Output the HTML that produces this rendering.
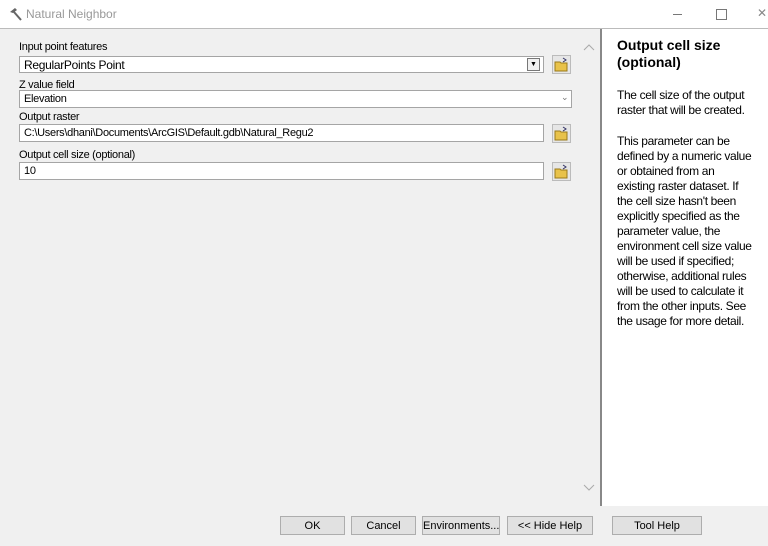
<!DOCTYPE html>
<html><head><style>
body{margin:0;width:768px;height:546px;background:#f0f0f0;font-family:"Liberation Sans",sans-serif;position:relative;overflow:hidden}
.a{position:absolute}
.lbl{font-size:11px;color:#000;letter-spacing:-0.3px}
.box{background:#fff;border:1px solid #a5a5a5;font-size:11px;box-sizing:border-box;padding:2px 4px;letter-spacing:-0.3px}
.btn{border:1px solid #adadad;background:#e1e1e1;font-size:11px;text-align:center;line-height:18px;box-sizing:border-box;height:19px;top:516px}
.help{font-size:12px;line-height:15px;color:#000;letter-spacing:-0.35px;white-space:nowrap}
</style></head><body>
<div class="a" style="left:0;top:0;width:768px;height:28px;background:#fff;border-bottom:1px solid #bbb"></div>
<svg class="a" style="left:7px;top:6px" width="16" height="16"><path d="M3 6 L8 2 L10 4 L6 7 Z" fill="#666"/><path d="M7 6 L14 14" stroke="#666" stroke-width="2"/></svg>
<div class="a" style="left:26px;top:7px;font-size:12px;color:#999">Natural Neighbor</div>
<div class="a" style="left:673px;top:14px;width:9px;height:1px;background:#777"></div>
<div class="a" style="left:716px;top:9px;width:9px;height:9px;border:1px solid #777"></div>
<div class="a" style="left:757px;top:6px;font-size:12px;color:#888">✕</div>

<div class="a lbl" style="left:19px;top:41px">Input point features</div>
<div class="a box" style="left:19px;top:56px;width:525px;height:17px;font-size:12px;padding-top:1px">RegularPoints Point</div>
<div class="a" style="left:527px;top:58px;width:13px;height:13px;border:1px solid #777;box-sizing:border-box;background:#f0f0f0;font-size:7px;text-align:center;line-height:12px">▼</div>
<div class="a lbl" style="left:19px;top:79px">Z value field</div>
<div class="a box" style="left:19px;top:90px;width:553px;height:18px">Elevation</div>
<div class="a" style="left:561px;top:92px;font-size:9px;color:#777">&#8964;</div>
<div class="a lbl" style="left:19px;top:111px">Output raster</div>
<div class="a box" style="left:19px;top:124px;width:525px;height:18px">C:\Users\dhani\Documents\ArcGIS\Default.gdb\Natural_Regu2</div>
<div class="a lbl" style="left:19px;top:149px">Output cell size (optional)</div>
<div class="a box" style="left:19px;top:162px;width:525px;height:18px">10</div>

<svg class="a" style="left:552px;top:55px" width="19" height="19"><rect x=".5" y=".5" width="18" height="18" fill="#e6e6e6" stroke="#bbb"/><path d="M3 7h5l1 1h6v8H3z" fill="#e8c24a" stroke="#9a7a1a"/><path d="M11 3l3 2-3 2" stroke="#336" fill="none"/></svg>
<svg class="a" style="left:552px;top:124px" width="19" height="19"><rect x=".5" y=".5" width="18" height="18" fill="#e6e6e6" stroke="#bbb"/><path d="M3 7h5l1 1h6v8H3z" fill="#e8c24a" stroke="#9a7a1a"/><path d="M11 3l3 2-3 2" stroke="#336" fill="none"/></svg>
<svg class="a" style="left:552px;top:162px" width="19" height="19"><rect x=".5" y=".5" width="18" height="18" fill="#e6e6e6" stroke="#bbb"/><path d="M3 7h5l1 1h6v8H3z" fill="#e8c24a" stroke="#9a7a1a"/><path d="M11 3l3 2-3 2" stroke="#336" fill="none"/></svg>

<svg class="a" style="left:583px;top:43px" width="12" height="8"><path d="M1 7l5-5 5 5" stroke="#aaa" fill="none"/></svg>
<svg class="a" style="left:583px;top:484px" width="12" height="8"><path d="M1 1l5 5 5-5" stroke="#aaa" fill="none"/></svg>

<div class="a" style="left:600px;top:29px;width:2px;height:477px;background:#888"></div>
<div class="a" style="left:602px;top:29px;width:166px;height:477px;background:#fff"></div>
<div class="a" style="left:617px;top:37px;font-size:14px;font-weight:bold;line-height:17px">Output cell size<br>(optional)</div>
<div class="a help" style="left:617px;top:88px">The cell size of the output<br>raster that will be created.</div>
<div class="a help" style="left:617px;top:134px">This parameter can be<br>defined by a numeric value<br>or obtained from an<br>existing raster dataset. If<br>the cell size hasn't been<br>explicitly specified as the<br>parameter value, the<br>environment cell size value<br>will be used if specified;<br>otherwise, additional rules<br>will be used to calculate it<br>from the other inputs. See<br>the usage for more detail.</div>

<div class="a btn" style="left:280px;width:65px">OK</div>
<div class="a btn" style="left:351px;width:65px">Cancel</div>
<div class="a btn" style="left:422px;width:78px">Environments...</div>
<div class="a btn" style="left:507px;width:86px">&lt;&lt; Hide Help</div>
<div class="a btn" style="left:612px;width:90px">Tool Help</div>
</body></html>
